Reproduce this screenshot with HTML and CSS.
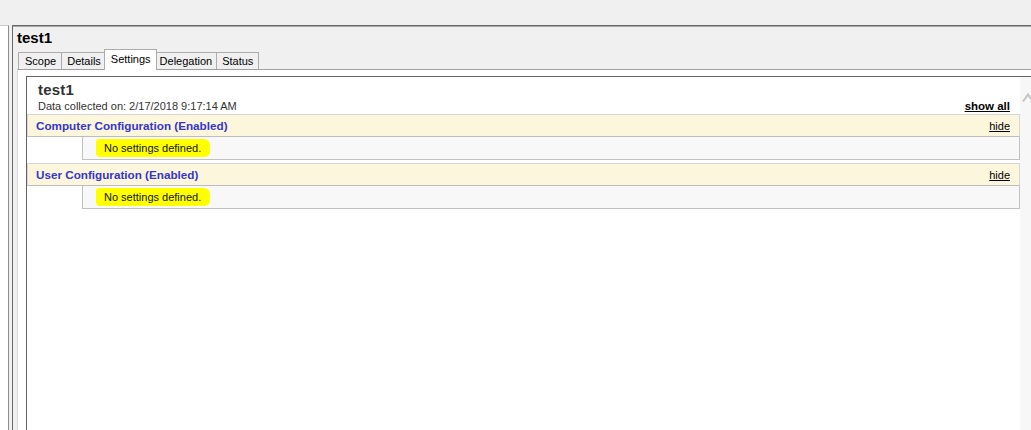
FILE: index.html
```html
<!DOCTYPE html>
<html>
<head>
<meta charset="utf-8">
<link rel="stylesheet" href="styles.css">
</head>
<body>
<div class="top"></div>
<div class="main">
  <div class="leftpane"></div>
  <div class="panel">
    <div class="title">test1</div>
    <div class="tabs">
      <div class="tab">Scope</div>
      <div class="tab">Details</div>
      <div class="tab active">Settings</div>
      <div class="tab">Delegation</div>
      <div class="tab">Status</div>
    </div>
    <div class="page">
      <div class="browser">
        <div class="report">
          <div class="rtitle">test1</div>
          <div class="meta"><span>Data collected on: 2/17/2018 9:17:14 AM</span><span class="showall">show all</span></div>
          <div class="section">
            <div class="shead"><span class="stitle">Computer Configuration (Enabled)</span><span class="hide">hide</span></div>
            <div class="sbody"><span class="hl">No settings defined.</span></div>
          </div>
          <div class="section">
            <div class="shead"><span class="stitle">User Configuration (Enabled)</span><span class="hide">hide</span></div>
            <div class="sbody"><span class="hl">No settings defined.</span></div>
          </div>
        </div>
        <div class="scrollbar">
          <svg class="chev" width="11" height="30" viewBox="0 0 11 30"><polyline points="3,24.5 8,17.5 13,24.5" fill="none" stroke="#c4c4c4" stroke-width="2"/></svg>
        </div>
      </div>
    </div>
  </div>
</div>
</body>
</html>
```
FILE: styles.css
```css
html, body { margin: 0; padding: 0; }
body {
  width: 1031px;
  height: 430px;
  overflow: hidden;
  background: #f0f0f0;
  font-family: "Liberation Sans", Arial, sans-serif;
  font-size: 11px;
  color: #000;
}
.top { height: 25px; }
.main { display: flex; height: 405px; }
.leftpane {
  width: 8px;
  background: #fff;
  border-top: 1px solid #c8c8c8;
  border-right: 1px solid #8c8c8c;
}
.panel {
  margin-left: 3px;
  flex: 1;
  min-width: 0;
  border-left: 1px solid #696969;
  border-top: 1px solid #6a6a6a;
  box-shadow: inset 0 1px 0 #a8a8a8;
  padding-left: 4px;
  display: flex;
  flex-direction: column;
}
.title {
  font-weight: bold;
  font-size: 15px;
  line-height: 23px;
}
.tabs {
  display: flex;
  align-items: flex-end;
  padding-left: 2px;
}
.tab {
  border: 1px solid #acacac;
  border-bottom: none;
  background: #f0f0f0;
  line-height: 16px;
  padding: 0 5px 0 6px;
  margin-left: -1px;
}
.tab:nth-child(2) { padding: 0 4px 0 5px; }
.tab:nth-child(4) { padding: 0 4px 0 5px; }
.tab:nth-child(5) { padding: 0 5px 0 5px; }
.tab.active {
  background: #fff;
  padding: 1px 5px 3px 6px;
  margin: 0 -2px -1px -2px;
  position: relative;
  z-index: 1;
}
.page {
  flex: 1;
  background: #fff;
  border-top: 1px solid #a0a0a0;
  border-left: 1px solid #dadada;
  padding: 6px 0 0 8px;
  display: flex;
}
.browser {
  flex: 1;
  display: flex;
  background: #fff;
  border-left: 1px solid #646464;
  border-top: 1px solid #646464;
}
.report { flex: 1; min-width: 0; }
.scrollbar { width: 11px; background: #f7f7f7; }
.chev { display: block; }
.rtitle {
  padding: 4px 0 0 11px;
  font-weight: bold;
  font-size: 15px;
  line-height: 18px;
  color: #333;
  letter-spacing: 0.2px;
}
.meta {
  display: flex;
  justify-content: space-between;
  padding: 0 10px 0 11px;
  line-height: 15px;
  color: #333;
}
.showall {
  font-weight: bold;
  color: #000;
  text-decoration: underline;
  font-size: 11.5px;
}
.section + .section { margin-top: 3px; }
.shead {
  display: flex;
  justify-content: space-between;
  align-items: center;
  height: 21px;
  border: 1px solid #d6d6d6;
  border-bottom-color: #bdbdbd;
  background: #fcf6dc;
  padding: 0 9px 0 8px;
}
.stitle {
  font-weight: bold;
  font-size: 11.7px;
  color: #3636cc;
}
.hide { color: #000; text-decoration: underline; }
.sbody {
  margin-left: 55px;
  height: 22px;
  border: 1px solid #c2c2c2;
  border-top: none;
  background: #f8f8f8;
  padding-left: 13px;
  display: flex;
  align-items: center;
}
.hl {
  background: #ffff00;
  padding: 0 9px 0 8px;
  line-height: 18px;
  border-radius: 3px 6px 5px 4px;
  color: #111;
}
```
